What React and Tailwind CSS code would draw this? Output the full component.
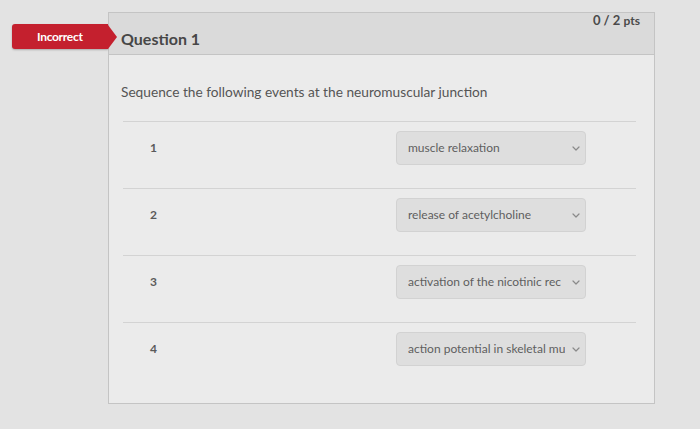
import React from 'react'

const answers = [
  'muscle relaxation',
  'release of acetylcholine',
  'activation of the nicotinic rec',
  'action potential in skeletal mu',
]

const Chevron = () => (
  <svg width="8" height="5" viewBox="0 0 8 5" fill="none" className="shrink-0">
    <path d="M1 1l3 3 3-3" stroke="#8a8a8a" strokeWidth="1.2" strokeLinecap="round" strokeLinejoin="round" />
  </svg>
)

const AnswerRow = ({ n, text }) => (
  <div className="flex items-center border-t border-[#d3d3d3] pb-[23px] pt-[9px]">
    <div className="w-[273px] pl-[27px] text-[12px] font-bold text-[#5a5a5a]">{n}</div>
    <div className="flex h-[34px] w-[190px] items-center justify-between overflow-hidden rounded-[4px] border border-[#d2d2d2] bg-[#dedede] pl-[11px] pr-[5px]">
      <span className="truncate whitespace-nowrap text-[12px] text-[#5e5e5e]">{text}</span>
      <Chevron />
    </div>
  </div>
)

export default function App() {
  return (
    <div className="relative h-[429px] w-[700px] overflow-hidden bg-[#e3e3e3] pt-[12px] font-['Lato','Liberation_Sans',sans-serif]">
      {/* status badge */}
      <div className="absolute left-[12px] top-[24px] flex h-[25px] items-center">
        <div className="flex h-full w-[96px] items-center rounded-l-[3px] bg-[#c4202e] pl-[25px] text-[12px] font-bold tracking-[-0.3px] text-white shadow-[0_1px_2px_rgba(0,0,0,0.25)]">
          Incorrect
        </div>
        <div className="h-0 w-0 border-y-[12.5px] border-l-[9px] border-y-transparent border-l-[#c4202e]" />
      </div>

      <div className="ml-[108px] w-[547px] border border-[#c4c4c4] bg-[#ebebeb]">
        <div className="flex h-[42px] items-start justify-between border-b border-[#c4c4c4] bg-[#dadada] pl-[12px] pr-[14px]">
          <div className="pt-[16px] text-[16px] font-bold leading-[20px] text-[#474747]">Question 1</div>
          <div className="pt-0 text-[13px] font-bold leading-[14px] text-[#4a4a4a]">
            0 / 2 <span className="text-[12px]">pts</span>
          </div>
        </div>

        <div className="pb-[14px] pl-[14px] pr-[18px] pt-[27px]">
          <p className="mb-[19px] -ml-[2px] text-[13.7px] leading-[20px] text-[#555]">
            Sequence the following events at the neuromuscular junction
          </p>
          <div>
            {answers.map((a, i) => (
              <AnswerRow key={i} n={i + 1} text={a} />
            ))}
          </div>
        </div>
      </div>
    </div>
  )
}
